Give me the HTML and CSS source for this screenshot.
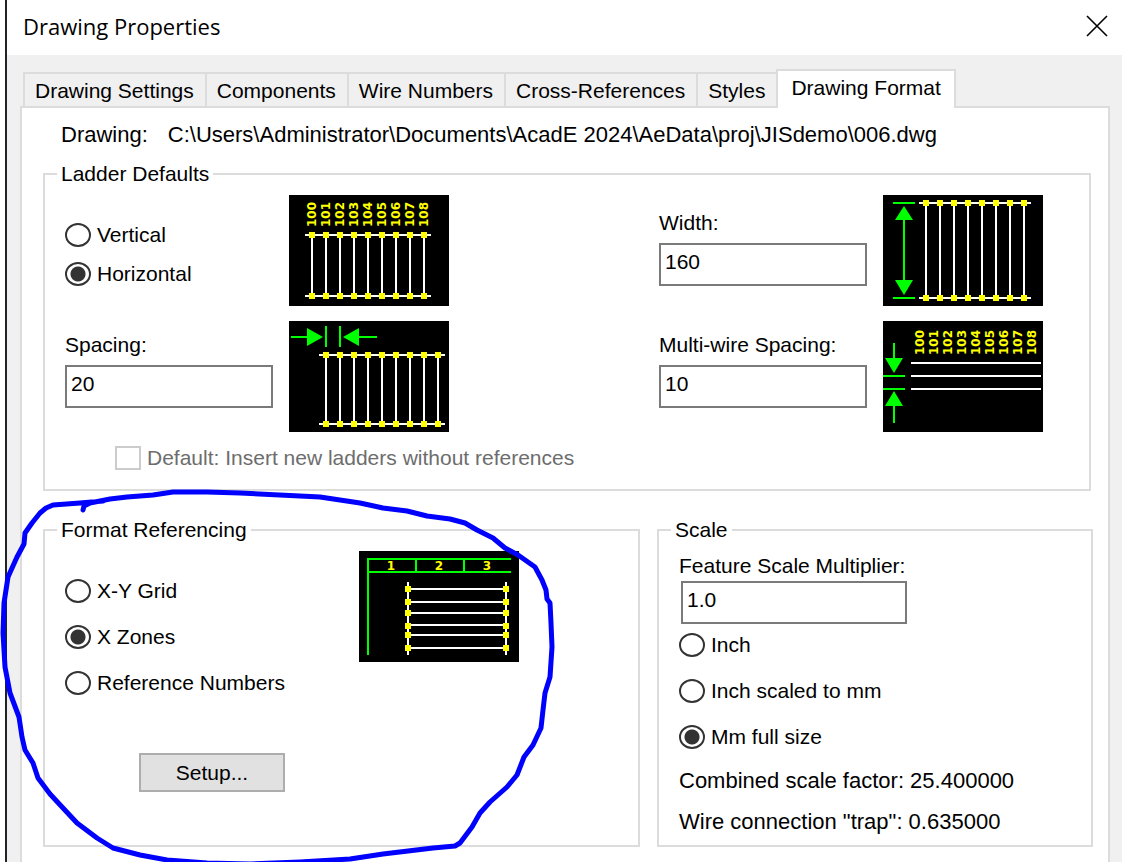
FILE: index.html
```html
<!DOCTYPE html>
<html lang="en">
	<head>
		<meta charset="UTF-8">
		<title>Drawing Properties</title>
		<link rel="stylesheet" href="styles.css">
	</head>
	<body>
		<div class="dialog">
			<div class="titlebar">
				<h1>Drawing Properties</h1>
				<button type="button" class="close" aria-label="Close">
					<svg width="22" height="22" viewBox="0 0 22 22"><path d="M1 1L21 21M21 1L1 21"/></svg>
				</button>
			</div>
			<div class="tabs" role="tablist">
				<button type="button" role="tab">Drawing Settings</button>
				<button type="button" role="tab">Components</button>
				<button type="button" role="tab">Wire Numbers</button>
				<button type="button" role="tab">Cross-References</button>
				<button type="button" role="tab">Styles</button>
				<button type="button" role="tab" class="active" aria-selected="true">Drawing Format</button>
			</div>
			<div class="panel">
				<p class="path"><span>Drawing:</span><span>C:\Users\Administrator\Documents\AcadE 2024\AeData\proj\JISdemo\006.dwg</span></p>

				<fieldset class="ladder">
					<legend>Ladder Defaults</legend>
					<div class="grid">
						<div class="radios direction">
							<label><input type="radio" name="direction">Vertical</label>
							<label><input type="radio" name="direction" checked>Horizontal</label>
						</div>
						<svg class="pic" width="160" height="111" viewBox="0 0 160 111">
							<path class="wire" d="M16 40H142M16 101H142M23 40V101M37 40V101M51 40V101M65 40V101M79 40V101M93 40V101M107 40V101M121 40V101M135 40V101"/>
							<path class="dots" d="M20 40H142M20 101H142"/>
							<g class="nums">
								<text transform="translate(27 32) rotate(-90)">100</text>
								<text transform="translate(41 32) rotate(-90)">101</text>
								<text transform="translate(55 32) rotate(-90)">102</text>
								<text transform="translate(69 32) rotate(-90)">103</text>
								<text transform="translate(83 32) rotate(-90)">104</text>
								<text transform="translate(97 32) rotate(-90)">105</text>
								<text transform="translate(111 32) rotate(-90)">106</text>
								<text transform="translate(125 32) rotate(-90)">107</text>
								<text transform="translate(139 32) rotate(-90)">108</text>
							</g>
						</svg>
						<div class="field right">
							<label for="width">Width:</label>
							<input type="text" id="width" value="160">
						</div>
						<svg class="pic" width="160" height="111" viewBox="0 0 160 111">
							<path class="wire" d="M36 8H148M36 103H148M43 8V103M57 8V103M71 8V103M85 8V103M99 8V103M113 8V103M127 8V103M141 8V103"/>
							<path class="dots" d="M40 8H148M40 103H148"/>
							<path class="dim" d="M10 8H32M10 103H32M21 24V87"/>
							<path class="arrow" d="M21 11L30 25H12ZM12 85H30L21 100Z"/>
						</svg>

						<div class="field second">
							<label for="spacing">Spacing:</label>
							<input type="text" id="spacing" value="20">
						</div>
						<svg class="pic" width="160" height="111" viewBox="0 0 160 111">
							<path class="wire" d="M30 34H156M30 103H156M37 34V103M51 34V103M65 34V103M79 34V103M93 34V103M107 34V103M121 34V103M135 34V103M149 34V103"/>
							<path class="dots" d="M34 34H156M34 103H156"/>
							<path class="dim" d="M37 5V26M51 5V26M2 16H20M68 16H88"/>
							<path class="arrow" d="M18 7L34 16L18 25ZM70 7L54 16L70 25Z"/>
						</svg>
						<div class="field second right">
							<label for="multi">Multi-wire Spacing:</label>
							<input type="text" id="multi" value="10">
						</div>
						<svg class="pic" width="160" height="111" viewBox="0 0 160 111">
							<path class="wire" d="M28 42H158M28 55H158M28 68H158"/>
							<path class="dim" d="M0 55H22M0 68H22M11 22V40M11 83V102"/>
							<path class="arrow" d="M2 37H20L11 52ZM11 70L20 85H2Z"/>
							<g class="nums">
								<text transform="translate(41 34) rotate(-90)">100</text>
								<text transform="translate(55 34) rotate(-90)">101</text>
								<text transform="translate(69 34) rotate(-90)">102</text>
								<text transform="translate(83 34) rotate(-90)">103</text>
								<text transform="translate(97 34) rotate(-90)">104</text>
								<text transform="translate(111 34) rotate(-90)">105</text>
								<text transform="translate(125 34) rotate(-90)">106</text>
								<text transform="translate(139 34) rotate(-90)">107</text>
								<text transform="translate(153 34) rotate(-90)">108</text>
							</g>
						</svg>
					</div>
					<label class="check"><input type="checkbox" disabled>Default: Insert new ladders without references</label>
				</fieldset>

				<div class="bottom">
					<fieldset class="format">
						<legend>Format Referencing</legend>
						<div class="format-row">
							<div class="radios">
								<label><input type="radio" name="format">X-Y Grid</label>
								<label><input type="radio" name="format" checked>X Zones</label>
								<label><input type="radio" name="format">Reference Numbers</label>
							</div>
							<svg class="pic" width="160" height="111" viewBox="0 0 160 111">
								<path class="dim" d="M8 8H152M8 21H152M9 8V104M57 8V21M105 8V21"/>
								<path class="wire" d="M49 31V104M147 31V104M49 38H147M49 51H147M49 62H147M49 74H147M49 84H147M49 97H147"/>
								<path class="arrow node" d="M46 35h6v6h-6zM46 48h6v6h-6zM46 59h6v6h-6zM46 72h6v6h-6zM46 81h6v6h-6zM46 94h6v6h-6zM144 35h6v6h-6zM144 48h6v6h-6zM144 59h6v6h-6zM144 72h6v6h-6zM144 81h6v6h-6zM144 94h6v6h-6z"/>
								<g class="nums zones">
									<text x="32" y="19">1</text>
									<text x="80" y="19">2</text>
									<text x="128" y="19">3</text>
								</g>
							</svg>
						</div>
						<button type="button" class="setup">Setup...</button>
					</fieldset>

					<fieldset class="scale">
						<legend>Scale</legend>
						<label for="multiplier">Feature Scale Multiplier:</label>
						<input type="text" id="multiplier" value="1.0">
						<div class="radios">
							<label><input type="radio" name="scale">Inch</label>
							<label><input type="radio" name="scale">Inch scaled to mm</label>
							<label><input type="radio" name="scale" checked>Mm full size</label>
						</div>
						<p>Combined scale factor: 25.400000</p>
						<p>Wire connection "trap": 0.635000</p>
					</fieldset>
				</div>
			</div>
		</div>

		<!-- pen mark round Format Referencing -->
		<svg class="mark" width="600" height="865" viewBox="0 0 600 865">
			<path d="M83 510L84 506L90 503L110 499L127 497L153 495L173 492L207 492L240 493L300 496L320 497L360 503L383 508L407 511L427 516L450 519L465 523L477 530L493 538L505 548L518 555L535 567L542 580L546 590L547 599L550 603L551 623L552 647L550 677L545 693L543 710L541 728L533 745L524 757L517 775L507 787L490 802L480 813L472 827L460 843L455 846L433 848L383 854L350 859L300 862L250 864L207 863L167 860L140 855L113 848L97 838L77 823L63 808L50 794L38 778L33 763L25 750L22 737L19 717L10 693L5 667L3 633L4 603L8 577L17 557L24 544L25 533L32 523L40 513L46 508L53 505L80 503L103 501"/>
		</svg>
	</body>
</html>
```
FILE: styles.css
```css
*{
	margin:0;
	padding:0;
	box-sizing: border-box;
}
body{
	position: relative;
	padding-left:5px;
	background: #fff;
	font: 21px/24px "Liberation Sans", Arial, sans-serif;
	color:#000;
}
input,button{
	font: inherit;
	color: inherit;
}
.dialog{
	border-left:2px solid #1f2327;
	background: #f0f0f0;
}
.titlebar{
	display: flex;
	justify-content: space-between;
	align-items: center;
	height: 55px;
	padding:0 14px 3px 16px;
	background: #fff;
}
.titlebar h1{
	font: 22px/30px "Open Sans", "Noto Sans", sans-serif;
}
.close{
	display: block;
	width: 22px;
	height: 22px;
	border:0;
	background: none;
}
.close svg{
	display: block;
	fill:none;
	stroke:#000;
	stroke-width:1.6;
}

/* tabs */
.tabs{
	display: flex;
	align-items: flex-end;
	padding:14px 0 0 16px;
}
.tabs button{
	height: 34px;
	padding:2px 11px 0 10px;
	border:solid #dcdcdc;
	border-width:2px 0 0 2px;
	background: #f0f0f0;
	white-space: nowrap;
}
.tabs .active{
	position: relative;
	height: 39px;
	margin-bottom:-2px;
	padding:0 13px 4px;
	border-width:2px 2px 0;
	background: #fff;
}
.panel{
	margin:0 12px 0 13px;
	padding:15px 17px 15px 21px;
	border:solid #dcdcdc;
	border-width:2px 2px 0;
	background: #fff;
}
.path{
	display: flex;
	gap:20px;
	padding-left:18px;
	font-size: 22px;
	white-space: nowrap;
}

/* groups */
fieldset{
	min-width:0;
	border:2px solid #dcdcdc;
}
legend{
	margin-left:-8px;
	padding:0 4px;
}
.ladder{
	margin-top:15px;
	padding:9px 46px 19px 20px;
}
.grid{
	display: grid;
	grid-template-columns: 208px 160px 1fr 208px 160px;
	gap:15px 16px;
}
.right{
	grid-column: 4;
}
.field{
	display: flex;
	flex-direction: column;
	gap:8px;
	padding-top:16px;
}
.second{
	padding-top:12px;
}
input[type=text]{
	width: 100%;
	height: 43px;
	padding:0 4px 6px;
	border:2px solid #7a7a7a;
	background: #fff;
}
.radios{
	display: flex;
	flex-direction: column;
	gap:22px;
}
.direction{
	gap:15px;
	padding-top:28px;
}
.radios label,.check{
	display: flex;
	align-items: center;
	gap:6px;
}
input[type=radio]{
	appearance: none;
	width: 26px;
	height: 24px;
	border:2px solid #333;
	border-radius:50%;
	background: #fff;
}
input[type=radio]:checked{
	background: radial-gradient(circle, #333 7px, #fff 8px);
}
input[type=checkbox]{
	appearance: none;
	width: 26px;
	height: 24px;
	border:2px solid #ccc;
	background: #fff;
}
.check{
	margin:14px 0 0 50px;
	color:#6d6d6d;
}
.bottom{
	display: grid;
	grid-template-columns: 597fr 436fr;
	gap:17px;
	margin:27px -2px 0 0;
}
.format{
	padding:9px 20px 52px;
}
.format-row{
	display: flex;
	justify-content: space-between;
	padding-right:99px;
}
.format .radios{
	padding-top:28px;
}
.setup{
	display: block;
	width: 146px;
	height: 39px;
	margin:58px 0 0 74px;
	border:2px solid #adadad;
	background: #e1e1e1;
}
.scale{
	padding:12px 20px 11px;
}
.scale > label{
	display: block;
}
.scale input[type=text]{
	display: block;
	width: 226px;
	margin:3px 0 9px 2px;
}
.scale p{
	margin-top:17px;
	font-size: 22px;
}
.scale .radios + p{
	margin-top:20px;
}

/* preview drawings */
.pic{
	display: block;
	background: #000;
}
.wire,.dim{
	fill:none;
	stroke:#fff;
	stroke-width:2;
	shape-rendering: crispEdges;
}
.dim{
	stroke:#0f0;
}
.dots{
	fill:none;
	stroke:#ff0;
	stroke-width:6;
	stroke-dasharray:6 8;
	shape-rendering: crispEdges;
}
.arrow{
	fill:#0f0;
}
.node{
	fill:#ff0;
}
.nums{
	fill:#ff0;
	font: bold 12px "DejaVu Sans", Verdana, sans-serif;
}
.zones{
	text-anchor: middle;
}
.mark{
	position: absolute;
	top:0;
	left:0;
	fill:none;
	stroke:#00f;
	stroke-width:5;
	stroke-linejoin: round;
	stroke-linecap: round;
	pointer-events: none;
}
```
